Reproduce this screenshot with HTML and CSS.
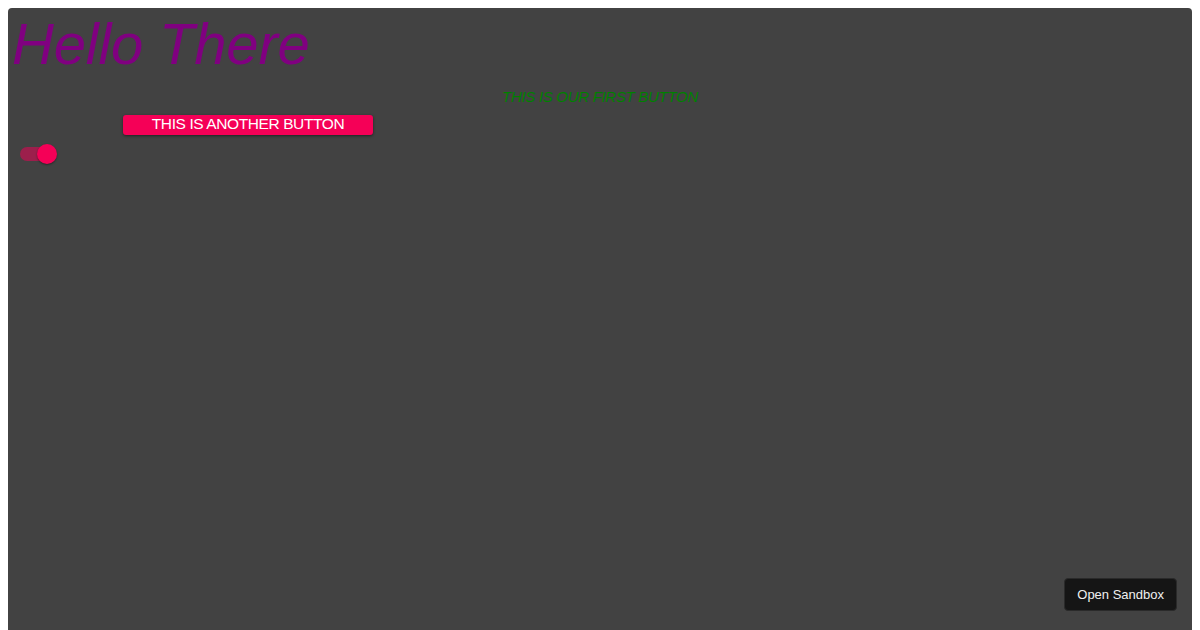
FILE: index.html
```html
<!DOCTYPE html>
<html>
<head>
<meta charset="utf-8">
<link rel="stylesheet" href="styles.css">
</head>
<body>
<div class="panel">
  <h1 class="title">Hello There</h1>
  <div class="first-row"><span class="first-btn">THIS IS OUR FIRST BUTTON</span></div>
  <div class="second-row"><button class="another-btn">THIS IS ANOTHER BUTTON</button></div>
  <div class="switch-row">
    <span class="switch"><span class="track"></span><span class="thumb"></span></span>
  </div>
  <button class="sandbox">Open Sandbox</button>
</div>
</body>
</html>
```
FILE: styles.css
```css
html, body {
  margin: 0;
  padding: 0;
  background: #ffffff;
  height: 100%;
  overflow: hidden;
}
body {
  padding: 8px 8px 0 8px;
  box-sizing: border-box;
  font-family: "Liberation Sans", Arial, sans-serif;
}
.panel {
  position: relative;
  background: #424242;
  border-radius: 4px 4px 0 0;
  height: 640px;
}
.title {
  margin: 0;
  padding: 0 0 0 4px;
  font-family: "Liberation Sans", Arial, sans-serif;
  font-style: italic;
  font-weight: normal;
  font-size: 58px;
  line-height: 72px;
  color: #800080;
  letter-spacing: -0.2px;
}
.first-row {
  display: flex;
  justify-content: center;
  margin-top: 7px;
}
.first-btn {
  font-style: italic;
  font-size: 15px;
  line-height: 20px;
  color: #008000;
  letter-spacing: -0.3px;
}
.second-row {
  padding-left: 115px;
  margin-top: 8px;
}
.another-btn {
  display: block;
  width: 250px;
  height: 20px;
  border: none;
  border-radius: 3px;
  background: #f50057;
  color: #ffffff;
  font-family: "Liberation Sans", Arial, sans-serif;
  font-size: 15.5px;
  letter-spacing: -0.4px;
  line-height: 18px;
  padding: 0 0 2px 0;
  box-shadow: 0 1px 3px rgba(0,0,0,0.5);
}
.switch-row {
  padding: 8px 0 0 12px;
}
.switch {
  position: relative;
  display: block;
  width: 38px;
  height: 22px;
}
.track {
  position: absolute;
  left: 0;
  top: 4px;
  width: 32px;
  height: 14px;
  border-radius: 7px;
  background: #9c1f4c;
}
.thumb {
  position: absolute;
  left: 17px;
  top: 1px;
  width: 20px;
  height: 20px;
  border-radius: 50%;
  background: #f50057;
  box-shadow: 0 1px 2px rgba(0,0,0,0.4);
}
.sandbox {
  position: absolute;
  right: 15px;
  top: 570px;
  height: 33px;
  padding: 0 12px;
  border: 1px solid #2a2a2a;
  border-radius: 4px;
  background: #151515;
  color: #f0f0f0;
  font-family: "Liberation Sans", Arial, sans-serif;
  font-size: 13px;
}
```
